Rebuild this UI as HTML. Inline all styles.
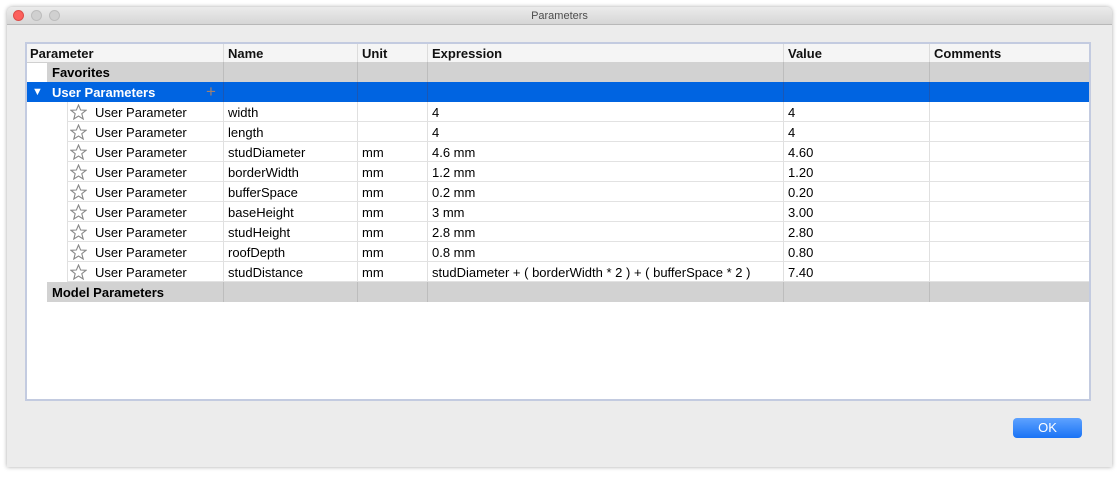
<!DOCTYPE html>
<html><head><style>
body{margin:0;width:1119px;height:477px;background:#fff;font-family:"Liberation Sans",Arial,sans-serif;font-size:13px;position:relative;overflow:hidden}
.win{position:absolute;left:7px;top:7px;width:1105px;height:460px;background:#ececec;box-shadow:0 0 4px rgba(0,0,0,.35);border-radius:5px 5px 0 0}
.title{position:absolute;left:0;top:0;width:1105px;height:17px;background:linear-gradient(#ebebeb,#d6d6d6);border-bottom:1px solid #b8b8b8;border-radius:5px 5px 0 0;text-align:center;font-size:11px;line-height:18px;color:#4d4d4d}
.dot{position:absolute;top:3px;width:11px;height:11px;border-radius:50%;background:#d0d0d0;border:1px solid #bdbdbd;box-sizing:border-box}
.frame{position:absolute;left:25px;top:42px;width:1066px;height:359px;background:#fff;border:2px solid #c3cbe0;box-sizing:border-box}
.r{position:absolute;left:0;height:20px;line-height:21px;width:1062px}
.c{position:absolute;top:0;height:100%;box-sizing:border-box;padding-left:4px;white-space:nowrap}
.hd{background:#f5f5f5;border-bottom:1px solid #d0d0d0;font-weight:bold;color:#111}
.hd .c{border-left:1px solid #dcdcdc}
.g{background:#d2d2d2;font-weight:bold}
.g .c{border-left:1px solid #bdbdbd}
.b{background:#0064e1;color:#fff;font-weight:bold}
.b .c{border-left:1px solid #1a57b5}
.w .c{border-left:1px solid #e0e0e0;border-bottom:1px solid #e2e2e2}
.star{position:absolute;left:43px;top:2px}
.ok{position:absolute;left:1013px;top:418px;width:69px;height:20px;border-radius:4px;background:linear-gradient(#5ea2ff,#1a73f5);color:#fff;text-align:center;line-height:20px;font-size:13px}
</style></head><body>
<div class="win">
<div class="title">Parameters
<div class="dot" style="left:6px;background:#fc605c;border-color:#de4b47"></div>
<div class="dot" style="left:24px"></div>
<div class="dot" style="left:42px"></div>
</div>
</div>
<div class="frame">
<div class="r hd" style="top:0;height:18px;line-height:19px">
<div class="c" style="left:0;border:0;padding-left:3px">Parameter</div>
<div class="c" style="left:196px">Name</div>
<div class="c" style="left:330px">Unit</div>
<div class="c" style="left:400px">Expression</div>
<div class="c" style="left:756px">Value</div>
<div class="c" style="left:902px">Comments</div>
</div>
<div class="r g" style="top:18px;left:20px;width:1042px">
<div class="c" style="left:0;border:0;padding-left:5px">Favorites</div>
<div class="c" style="left:176px"></div><div class="c" style="left:310px"></div><div class="c" style="left:380px"></div><div class="c" style="left:736px"></div><div class="c" style="left:882px"></div>
</div>
<div class="r b" style="top:38px">
<div class="c" style="left:0;border:0;padding-left:5px;font-size:11px">▼</div>
<div class="c" style="left:20px;border:0;padding-left:5px">User Parameters</div>
<div class="c" style="left:175px;border:0;color:#a08070;font-size:17px;line-height:20px;font-weight:normal">+</div>
<div class="c" style="left:196px"></div><div class="c" style="left:330px"></div><div class="c" style="left:400px"></div><div class="c" style="left:756px"></div><div class="c" style="left:902px"></div>
</div>
<div id="rows"></div>
<div class="r g" style="top:238px;left:20px;width:1042px">
<div class="c" style="left:0;border:0;padding-left:5px">Model Parameters</div>
<div class="c" style="left:176px"></div><div class="c" style="left:310px"></div><div class="c" style="left:380px"></div><div class="c" style="left:736px"></div><div class="c" style="left:882px"></div>
</div>
</div>
<div class="ok">OK</div>
<script>
var d=[["width","","4","4"],["length","","4","4"],["studDiameter","mm","4.6 mm","4.60"],["borderWidth","mm","1.2 mm","1.20"],["bufferSpace","mm","0.2 mm","0.20"],["baseHeight","mm","3 mm","3.00"],["studHeight","mm","2.8 mm","2.80"],["roofDepth","mm","0.8 mm","0.80"],["studDistance","mm","studDiameter + ( borderWidth * 2 ) + ( bufferSpace * 2 )","7.40"]];
var h="";d.forEach(function(x,i){h+='<div class="r w" style="top:'+(58+i*20)+'px"><div class="c" style="left:40px;width:156px;padding-left:27px">User Parameter</div><svg class="star" width="17" height="16" viewBox="0 0 17 16"><path d="M8.5 1 L10.6 6 L16 6.3 L11.8 9.7 L13.2 15 L8.5 12 L3.8 15 L5.2 9.7 L1 6.3 L6.4 6 Z" fill="none" stroke="#888" stroke-width="1.1"/></svg><div class="c" style="left:196px;width:134px">'+x[0]+'</div><div class="c" style="left:330px;width:70px">'+x[1]+'</div><div class="c" style="left:400px;width:356px">'+x[2]+'</div><div class="c" style="left:756px;width:146px">'+x[3]+'</div><div class="c" style="left:902px;width:160px"></div></div>'});
document.getElementById("rows").innerHTML=h;
</script>
</body></html>
